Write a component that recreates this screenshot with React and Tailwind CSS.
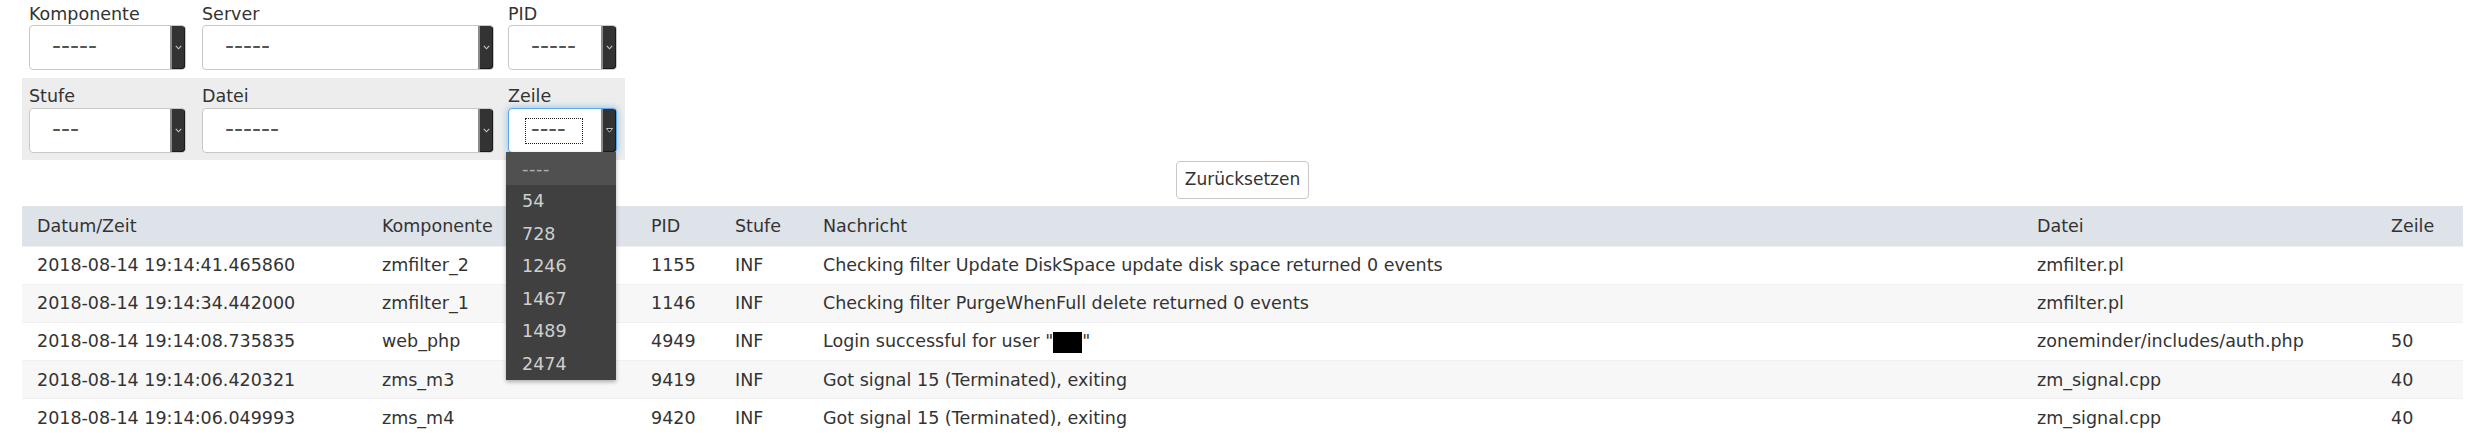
import React from "react";

const rows = [
  { time: "2018-08-14 19:14:41.465860", comp: "zmfilter_2", pid: "1155", level: "INF", msg: "Checking filter Update DiskSpace update disk space returned 0 events", file: "zmfilter.pl", line: "" },
  { time: "2018-08-14 19:14:34.442000", comp: "zmfilter_1", pid: "1146", level: "INF", msg: "Checking filter PurgeWhenFull delete returned 0 events", file: "zmfilter.pl", line: "" },
  { time: "2018-08-14 19:14:08.735835", comp: "web_php", pid: "4949", level: "INF", msg: "login", file: "zoneminder/includes/auth.php", line: "50" },
  { time: "2018-08-14 19:14:06.420321", comp: "zms_m3", pid: "9419", level: "INF", msg: "Got signal 15 (Terminated), exiting", file: "zm_signal.cpp", line: "40" },
  { time: "2018-08-14 19:14:06.049993", comp: "zms_m4", pid: "9420", level: "INF", msg: "Got signal 15 (Terminated), exiting", file: "zm_signal.cpp", line: "40" },
];

const lineOptions = ["54", "728", "1246", "1467", "1489", "2474"];

// dark GTK style drop button on the right side of each select
const DropButton = ({ focused }) => (
  <div className="flex w-[15px] shrink-0 items-center justify-center rounded-r-[3px] border-l-2 border-[#8a8a8a] bg-[#333] shadow-[inset_-1px_-1px_0_#1a1a1a]">
    <svg width="7" height="5" viewBox="0 0 7 5">
      {focused ? (
        <polygon points="0.5,0.5 6.5,0.5 3.5,4.2" fill="#111" stroke="#e5e5e5" strokeWidth="0.8" />
      ) : (
        <polyline points="0.8,0.8 3.5,3.8 6.2,0.8" fill="none" stroke="#c8c8c8" strokeWidth="1.1" />
      )}
    </svg>
  </div>
);

const Select = ({ className, text }) => (
  <div className={`flex h-[45px] overflow-hidden rounded-[4px] border border-[#c8c8c8] bg-white ${className}`}>
    <div className="flex flex-1 items-center pb-[4px] pl-[22px] text-[25px] leading-[25px] text-[#555]">{text}</div>
    <DropButton />
  </div>
);

const FilterCell = ({ label, children }) => (
  <div className="flex flex-col">
    <div className="text-[17.5px] leading-[20px] text-[#333]">{label}</div>
    {children}
  </div>
);

export default function App() {
  return (
    <div className="h-[438px] w-[2467px] overflow-hidden bg-white font-['DejaVu_Sans',sans-serif] text-[#333]">
      {/* filter table */}
      <div className="ml-[22px] w-[603px]">
        <div className="flex gap-[16px] pb-[8px] pl-[7px] pt-[4px]">
          <FilterCell label="Komponente">
            <Select className="mt-[1px] w-[157px]" text="-----" />
          </FilterCell>
          <FilterCell label="Server">
            <Select className="mt-[1px] w-[292px]" text="-----" />
          </FilterCell>
          <div className="-ml-[2px]">
            <FilterCell label="PID">
              <Select className="mt-[1px] w-[109px]" text="-----" />
            </FilterCell>
          </div>
        </div>
        <div className="flex gap-[16px] bg-[#ededed] pb-[7px] pl-[7px] pt-[8px]">
          <FilterCell label="Stufe">
            <Select className="mt-[2px] w-[157px]" text="---" />
          </FilterCell>
          <FilterCell label="Datei">
            <Select className="mt-[2px] w-[292px]" text="------" />
          </FilterCell>
          <div className="-ml-[2px]">
            <FilterCell label="Zeile">
              <div className="relative mt-[2px] w-[109px]">
                <div className="flex h-[45px] rounded-[4px] border border-[#5ea6ea] bg-white shadow-[0_0_6px_1px_rgba(102,175,233,0.6)]">
                  <div className="flex flex-1 items-center">
                    <span className="ml-[16px] flex h-[26px] w-[58px] items-center border border-dotted border-[#222] pb-[4px] pl-[5px] text-[24px] leading-[24px] text-[#555]">
                      ----
                    </span>
                  </div>
                  <DropButton focused />
                </div>
                {/* open option list */}
                <div className="absolute left-[-2px] top-[44px] z-10 w-[110px] bg-[#404040] shadow-[0_2px_4px_rgba(0,0,0,0.3)]">
                  <div className="flex h-[33px] items-center bg-[#505050] pl-[16px] text-[18px] tracking-[0.5px] text-[#a9b0b8]">----</div>
                  {lineOptions.map((o) => (
                    <div key={o} className="flex h-[32.5px] items-center pl-[16px] text-[17.5px] text-[#cfcfcf]">
                      {o}
                    </div>
                  ))}
                </div>
              </div>
            </FilterCell>
          </div>
        </div>
      </div>

      {/* reset button */}
      <div className="ml-[22px] flex w-[2441px] justify-center">
        <button className="mt-[1px] h-[38px] rounded-[4px] border border-[#c8c8c8] bg-white px-[8px] text-[17px] text-[#333]">
          Zurücksetzen
        </button>
      </div>

      {/* log table */}
      <table className="ml-[22px] mt-[7px] w-[2441px] table-fixed border-collapse text-[17.5px] text-[#333]">
        <colgroup>
          <col className="w-[345px]" />
          <col className="w-[269px]" />
          <col className="w-[84px]" />
          <col className="w-[88px]" />
          <col className="w-[1214px]" />
          <col className="w-[354px]" />
          <col className="w-[87px]" />
        </colgroup>
        <thead>
          <tr className="h-[40px] bg-[#dee2e9]">
            {["Datum/Zeit", "Komponente", "PID", "Stufe", "Nachricht", "Datei", "Zeile"].map((h) => (
              <th key={h} className="pl-[15px] text-left font-normal">
                {h}
              </th>
            ))}
          </tr>
        </thead>
        <tbody>
          {rows.map((r, i) => (
            <tr key={r.time} className={`h-[38.2px] border-t border-[#f0f0f0] ${i % 2 === 1 ? "bg-[#f7f7f7]" : "bg-white"}`}>
              <td className="whitespace-nowrap pl-[15px]">{r.time}</td>
              <td className="whitespace-nowrap pl-[15px]">{r.comp}</td>
              <td className="pl-[15px]">{r.pid}</td>
              <td className="pl-[15px]">{r.level}</td>
              <td className="whitespace-nowrap pl-[15px]">
                {r.msg === "login" ? (
                  <>
                    Login successful for user "<span className="inline-block h-[21px] w-[29px] bg-black align-middle" />"
                  </>
                ) : (
                  r.msg
                )}
              </td>
              <td className="whitespace-nowrap pl-[15px]">{r.file}</td>
              <td className="pl-[15px]">{r.line}</td>
            </tr>
          ))}
        </tbody>
      </table>
    </div>
  );
}
